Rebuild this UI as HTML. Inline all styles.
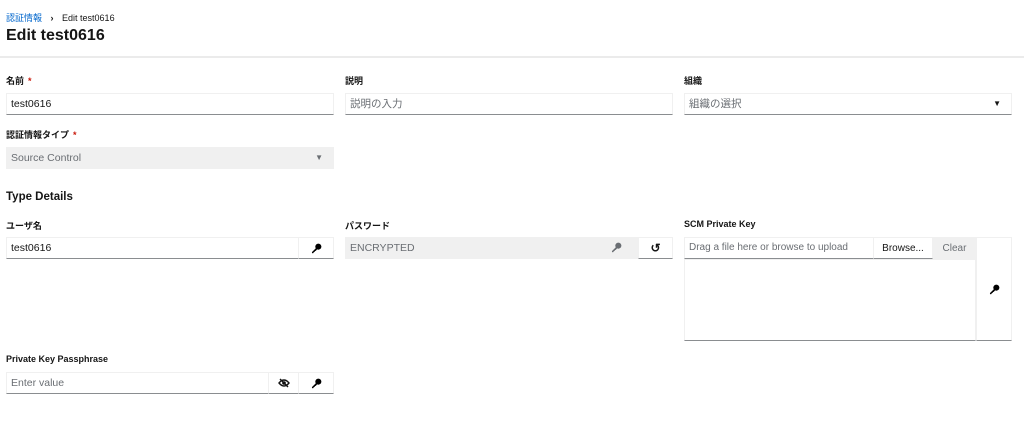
<!DOCTYPE html>
<html><head><meta charset="utf-8"><style>
body{margin:0;width:1024px;height:437px;background:#fff;font-family:"Liberation Sans","Noto Sans CJK JP",sans-serif;color:#151515;position:relative;overflow:hidden}
.a{position:absolute}
.lbl{position:absolute;font-size:9px;font-weight:bold}
.req{color:#c9190b;margin-left:4px}
.in{position:absolute;height:22px;border:1px solid #f0f0f0;border-bottom:1px solid #8a8d90;box-sizing:border-box;font-size:10.5px;line-height:20px;padding-left:4px;background:#fff}
.g{background:#f0f0f0;border-color:#f0f0f0;border-bottom-color:#f0f0f0;color:#6a6e73}
.ph{color:#6a6e73}
.btn{position:absolute;box-sizing:border-box;border:1px solid #f0f0f0;border-bottom:1px solid #8a8d90;background:#fff;display:flex;align-items:center;justify-content:center}
</style></head><body>
<svg width="0" height="0" style="position:absolute"><defs>
<symbol id="key" viewBox="0 0 12 12"><circle cx="8" cy="4" r="3.3"/><path d="M5.8 5.2 L1 10 L1.2 11.2 L2.6 11 L3 10 L4 9.8 L4.2 8.8 L5.2 8.6 L7 6.6Z"/></symbol>
</defs></svg>
<div class="a" style="left:6px;top:11px;font-size:9px"><span style="color:#06c">認証情報</span> <span style="margin:0 6px;font-weight:bold">›</span> Edit test0616</div>
<div class="a" style="left:6px;top:27px;font-size:16px;font-weight:bold">Edit test0616</div>
<div class="a" style="left:0;top:56px;width:1024px;height:2px;background:#ebebeb"></div>

<div class="lbl" style="left:6px;top:74px">名前<span class="req">*</span></div>
<div class="in" style="left:6px;top:93px;width:328px">test0616</div>
<div class="lbl" style="left:345px;top:74px">説明</div>
<div class="in ph" style="left:345px;top:93px;width:328px">説明の入力</div>
<div class="lbl" style="left:684px;top:74px">組織</div>
<div class="in ph" style="left:684px;top:93px;width:328px">組織の選択<span class="a" style="right:10px;top:0;color:#151515;font-size:8px">▼</span></div>

<div class="lbl" style="left:6px;top:128px">認証情報タイプ<span class="req">*</span></div>
<div class="in g" style="left:6px;top:147px;width:328px">Source Control<span class="a" style="right:10px;top:0;font-size:8px">▼</span></div>

<div class="a" style="left:6px;top:191px;font-size:11.5px;font-weight:bold">Type Details</div>

<div class="lbl" style="left:6px;top:219px">ユーザ名</div>
<div class="in" style="left:6px;top:237px;width:293px">test0616</div>
<div class="btn" style="left:298px;top:237px;width:36px;height:22px"><svg width="11" height="11"><use href="#key"/></svg></div>

<div class="lbl" style="left:345px;top:219px">パスワード</div>
<div class="in g" style="left:345px;top:237px;width:293px">ENCRYPTED<svg class="a" style="right:15px;top:4px;fill:#6a6e73" width="11" height="11"><use href="#key"/></svg></div>
<div class="btn" style="left:638px;top:237px;width:35px;height:22px;font-size:12px;font-weight:bold">↺</div>

<div class="lbl" style="left:684px;top:219px">SCM Private Key</div>
<div class="in ph" style="left:684px;top:237px;width:190px;font-size:10px">Drag a file here or browse to upload</div>
<div class="btn" style="left:873px;top:237px;width:60px;height:22px;font-size:10px">Browse...</div>
<div class="btn" style="left:933px;top:237px;width:43px;height:22px;font-size:10px;background:#f0f0f0;border-color:#f0f0f0;color:#6a6e73">Clear</div>
<div class="a" style="left:684px;top:259px;width:292px;height:82px;box-sizing:border-box;border:1px solid #f0f0f0;border-bottom:1px solid #8a8d90"></div>
<div class="btn" style="left:976px;top:237px;width:36px;height:104px"><svg width="11" height="11"><use href="#key"/></svg></div>

<div class="lbl" style="left:6px;top:354px">Private Key Passphrase</div>
<div class="in ph" style="left:6px;top:372px;width:263px">Enter value</div>
<div class="btn" style="left:268px;top:372px;width:31px;height:22px"><svg width="12" height="10" viewBox="0 0 12 10"><path d="M1 5 Q6 -1 11 5 Q6 11 1 5Z" fill="none" stroke="#151515" stroke-width="1.4"/><circle cx="6" cy="5" r="1.8"/><path d="M2 1 L10 9" stroke="#151515" stroke-width="1.4"/></svg></div>
<div class="btn" style="left:298px;top:372px;width:36px;height:22px"><svg width="11" height="11"><use href="#key"/></svg></div>
</body></html>
